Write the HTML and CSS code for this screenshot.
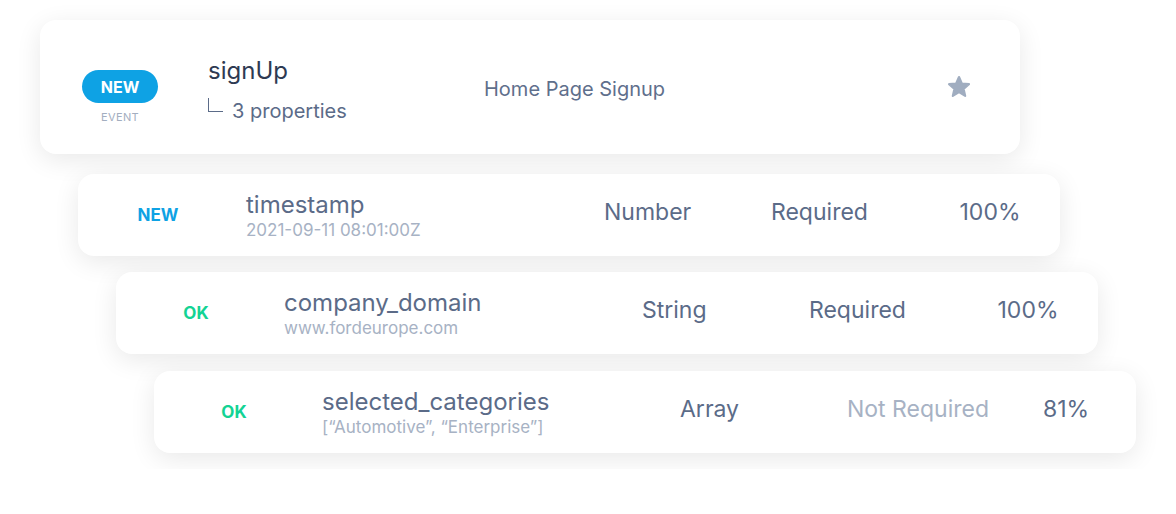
FILE: index.html
```html
<!DOCTYPE html>
<html lang="en">
	<head>
		<meta charset="utf-8">
		<title>Event tracking plan</title>
		<link rel="stylesheet" href="styles.css">
	</head>
	<body>
		<div class="stack">
			<div class="card card-event">
				<div class="status">
					<span class="pill">NEW</span>
					<span class="kind">EVENT</span>
				</div>
				<div class="event-name">
					<div class="title">signUp</div>
					<div class="props"><span class="corner"></span>3 properties</div>
				</div>
				<div class="desc">Home Page Signup</div>
				<div class="star">
					<svg width="26" height="26" viewBox="0 0 24 24">
						<polygon points="12,2.8 14.7,8.9 21.2,9.4 16.2,13.7 17.7,20.2 12,16.7 6.3,20.2 7.8,13.7 2.8,9.4 9.3,8.9" fill="#a0adc0" stroke="#a0adc0" stroke-width="2" stroke-linejoin="round"/>
					</svg>
				</div>
			</div>

			<div class="card prop shift1">
				<div class="status"><span class="tag tag-new">NEW</span></div>
				<div class="name">
					<div class="title">timestamp</div>
					<div class="sample">2021-09-11 08:01:00Z</div>
				</div>
				<div class="type">Number</div>
				<div class="req">Required</div>
				<div class="pct">100%</div>
			</div>

			<div class="card prop shift2">
				<div class="status"><span class="tag tag-ok">OK</span></div>
				<div class="name">
					<div class="title">company_domain</div>
					<div class="sample">www.fordeurope.com</div>
				</div>
				<div class="type">String</div>
				<div class="req">Required</div>
				<div class="pct">100%</div>
			</div>

			<div class="card prop shift3">
				<div class="status"><span class="tag tag-ok">OK</span></div>
				<div class="name">
					<div class="title">selected_categories</div>
					<div class="sample">[“Automotive”, “Enterprise”]</div>
				</div>
				<div class="type">Array</div>
				<div class="req muted">Not Required</div>
				<div class="pct">81%</div>
			</div>
		</div>
	</body>
</html>
```

FILE: styles.css
```css
body{
	margin: 0;
	background: #fff;
	font-family: Inter, "Noto Sans", sans-serif;
	color: #5b6b88;
}

.stack{
	display: flex;
	flex-direction: column;
	padding: 20px 0 0 40px;
}

.card{
	width: 980px;
	background: #fff;
	border-radius: 16px;
	box-shadow: 0 6px 26px rgba(0, 0, 0, 0.09);
	display: flex;
	align-items: center;
	box-sizing: border-box;
}

.status{
	width: 160px;
	margin-right: 8px;
	display: flex;
	flex-direction: column;
	align-items: center;
	flex-shrink: 0;
}

/*card do evento*/
.card-event{
	height: 134px;
	margin-bottom: 20px;
}

.card-event .status{
	margin-top: 20px;
}

.pill{
	width: 76px;
	height: 33px;
	border-radius: 17px;
	background: #0ea2e4;
	color: #fff;
	font-weight: 700;
	font-size: 16px;
	display: flex;
	align-items: center;
	justify-content: center;
}

.kind{
	margin-top: 7px;
	font-size: 11px;
	letter-spacing: 0.4px;
	color: #a3aec0;
}

.event-name{
	width: 276px;
	margin-top: 6px;
}

.event-name .title{
	font-size: 24px;
	line-height: 28px;
	color: #2e3a52;
}

.props{
	margin-top: 13px;
	font-size: 20px;
	line-height: 26px;
	display: flex;
	align-items: center;
	color: #5b6b88;
}

.corner{
	width: 14px;
	height: 13px;
	border-left: 1.5px solid #5b6b88;
	border-bottom: 1.5px solid #5b6b88;
	margin-right: 9px;
	margin-top: -12px;
}

.desc{
	flex: 1;
	font-size: 20px;
	margin-top: 4px;
	color: #5f6f8c;
}

.star{
	width: 26px;
	height: 26px;
	margin-right: 48px;
}

/*linhas de propriedades*/
.prop{
	width: 982px;
	height: 82px;
	margin-bottom: 16px;
}

.shift1{ margin-left: 38px; }
.shift2{ margin-left: 76px; }
.shift3{ margin-left: 114px; margin-top: 1px; }

.tag{
	font-size: 17px;
	font-weight: 700;
}

.tag-new{ color: #0ea2e4; }
.tag-ok{ color: #13d394; }

.name{
	width: 358px;
	margin-top: 2px;
}

.name .title{
	font-size: 24px;
	line-height: 28px;
}

.sample{
	font-size: 17px;
	line-height: 22px;
	color: #a7b2c4;
}

.type{
	width: 167px;
	font-size: 23px;
	margin-top: -6px;
}

.req{
	width: 160px;
	font-size: 23px;
	margin-top: -6px;
}

.muted{
	color: #a7b2c4;
}

.pct{
	width: 118px;
	text-align: center;
	font-size: 23px;
	margin-top: -6px;
}
```
